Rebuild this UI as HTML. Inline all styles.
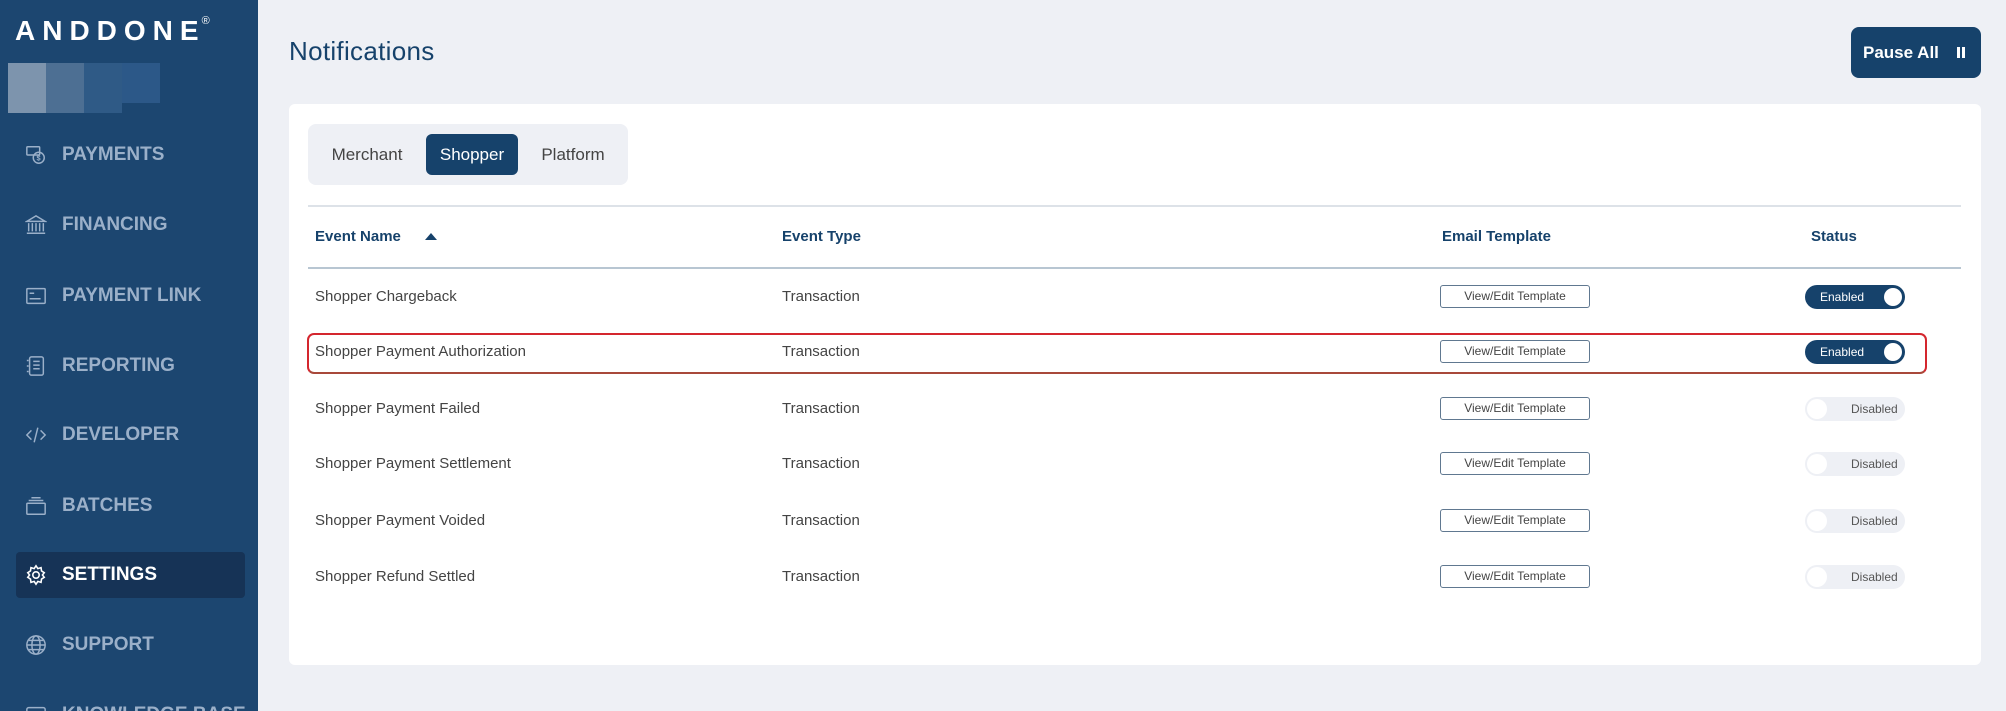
<!DOCTYPE html>
<html style="overflow:hidden"><head><meta charset="utf-8"><style>
*{box-sizing:border-box;margin:0;padding:0}
html,body{width:2006px;height:711px;overflow:hidden}
body{background:#eef0f5;font-family:"Liberation Sans",sans-serif;position:relative}
.sb{position:absolute;left:0;top:0;width:258px;height:711px;background:#1c4670;overflow:hidden}
.logo{position:absolute;left:15px;top:15px;color:#fff;font-weight:bold;font-size:28px;letter-spacing:7px}
.logo sup{font-size:11px;letter-spacing:0;font-weight:normal;vertical-align:top;position:relative;top:0px;left:-4px}
.blur{position:absolute;left:8px;top:63px;height:50px;display:flex}
.blur div{width:38px;height:50px}
.nav{position:absolute;left:0;width:258px;height:46px;display:flex;align-items:center;color:#9bb0c9;font-weight:bold;font-size:19px}
.nav svg{position:absolute;left:25px;width:22px;height:22px}
.nav span{position:absolute;left:62px}
.nav.act{left:16px;width:229px;background:#163356;border-radius:4px;color:#fff}
.nav.act svg{left:9px}.nav.act span{left:46px}
h1{position:absolute;left:289px;top:36px;font-size:26px;color:#16426b;font-weight:normal;letter-spacing:.3px}
.pause{position:absolute;left:1851px;top:27px;width:130px;height:51px;background:#16426b;border-radius:8px;color:#fff;font-weight:bold;font-size:17px;display:flex;align-items:center;padding-left:12px}
.pause i{display:inline-block;width:3px;height:11px;background:#fff;margin-left:4px}
.card{position:absolute;left:289px;top:104px;width:1692px;height:561px;background:#fff;border-radius:6px}
.tabs{position:absolute;left:308px;top:124px;width:320px;height:61px;background:#eef0f5;border-radius:8px}
.tab{position:absolute;top:10px;height:41px;line-height:41px;font-size:17px;color:#444;text-align:center}
.tab.on{background:#16426b;color:#fff;border-radius:6px}
.line{position:absolute;left:308px;width:1653px;height:2px;background:#dde2e8}
.th{position:absolute;top:228px;font-weight:bold;font-size:15px;color:#16426b}
.td{position:absolute;font-size:15px;color:#444}
.btn{position:absolute;left:1440px;width:150px;height:23px;border:1px solid #607890;border-radius:3px;font-size:12px;color:#444;text-align:center;line-height:21px}
.tg{position:absolute;left:1805px;width:100px;height:24px;border-radius:12px;font-size:12px;line-height:24px}
.tg.en{background:#16426b;color:#fff;padding-left:15px}
.tg.en::after{content:"";position:absolute;right:3px;top:3px;width:18px;height:18px;border-radius:50%;background:#fff}
.tg.dis{background:#eef0f5;color:#555;padding-left:46px}
.tg.dis::before{content:"";position:absolute;left:2px;top:2px;width:20px;height:20px;border-radius:50%;background:#fff}
.red{position:absolute;left:307px;top:333px;width:1620px;height:41px;border:2px solid #d4262e;border-bottom-color:#a8483a;border-radius:7px}
</style></head><body>
<div class="sb">
<div class="logo">ANDDONE<sup>®</sup></div>
<div class="blur"><div style="background:#7d94ad"></div><div style="background:#4d6f93"></div><div style="background:#2f5a86"></div><div style="background:#2c5888;height:40px"></div></div>
<div class="nav" style="top:132px"><svg viewBox="0 0 24 24" fill="none" stroke="#9bb0c9" stroke-width="1.6"><rect x="2" y="3" width="14" height="9" rx="1"/><circle cx="15" cy="15" r="6"/><text x="12.5" y="18" font-size="8" fill="#9bb0c9" stroke="none">$</text></svg><span>PAYMENTS</span></div>
<div class="nav" style="top:202px"><svg viewBox="0 0 24 24" fill="none" stroke="#9bb0c9" stroke-width="1.6"><path d="M2 8L12 2l10 6H2zM4 10v9M8 10v9M12 10v9M16 10v9M20 10v9M2 21h20"/></svg><span>FINANCING</span></div>
<div class="nav" style="top:273px"><svg viewBox="0 0 24 24" fill="none" stroke="#9bb0c9" stroke-width="1.6"><rect x="2" y="4" width="20" height="16" rx="1"/><path d="M5 9h5M5 15h12"/></svg><span>PAYMENT LINK</span></div>
<div class="nav" style="top:343px"><svg viewBox="0 0 24 24" fill="none" stroke="#9bb0c9" stroke-width="1.6"><rect x="5" y="2" width="15" height="20" rx="2"/><path d="M9 7h7M9 11h7M9 15h7M2 6h2M2 12h2M2 18h2"/></svg><span>REPORTING</span></div>
<div class="nav" style="top:412px"><svg viewBox="0 0 24 24" fill="none" stroke="#9bb0c9" stroke-width="1.6"><path d="M7 7l-5 5 5 5M17 7l5 5-5 5M14 4l-4 16"/></svg><span>DEVELOPER</span></div>
<div class="nav" style="top:483px"><svg viewBox="0 0 24 24" fill="none" stroke="#9bb0c9" stroke-width="1.6"><rect x="2" y="9" width="20" height="12" rx="1"/><path d="M4 6h16M7 3h10"/></svg><span>BATCHES</span></div>
<div class="nav act" style="top:552px"><svg viewBox="0 0 24 24" fill="none" stroke="#fff" stroke-width="1.7"><circle cx="12" cy="12" r="3.5"/><path d="M12 2l2 3 3.5-1 .5 3.5 3 2-2 2.5 2 2.5-3 2-.5 3.5-3.5-1-2 3-2-3-3.5 1-.5-3.5-3-2 2-2.5-2-2.5 3-2 .5-3.5 3.5 1z"/></svg><span>SETTINGS</span></div>
<div class="nav" style="top:622px"><svg viewBox="0 0 24 24" fill="none" stroke="#9bb0c9" stroke-width="1.6"><circle cx="12" cy="12" r="10"/><ellipse cx="12" cy="12" rx="4.5" ry="10"/><path d="M2 12h20M4 7h16M4 17h16"/></svg><span>SUPPORT</span></div>
<div class="nav" style="top:692px"><svg viewBox="0 0 24 24" fill="none" stroke="#9bb0c9" stroke-width="1.6"><rect x="2" y="4" width="20" height="16" rx="2"/></svg><span>KNOWLEDGE BASE</span></div>
</div>
<h1>Notifications</h1>
<div class="pause">Pause All&nbsp;&nbsp;&nbsp;<i></i><i style="margin-left:2px"></i></div>
<div class="card"></div>
<div class="tabs">
<div class="tab" style="left:12px;width:94px">Merchant</div>
<div class="tab on" style="left:118px;width:92px">Shopper</div>
<div class="tab" style="left:218px;width:94px">Platform</div>
</div>
<div class="line" style="top:205px"></div>
<div class="th" style="left:315px">Event Name</div>
<svg style="position:absolute;left:425px;top:232px" width="12" height="8"><path d="M0 8L6 1l6 7z" fill="#16426b"/></svg>
<div class="th" style="left:782px">Event Type</div>
<div class="th" style="left:1442px">Email Template</div>
<div class="th" style="left:1811px">Status</div>
<div class="line" style="top:267px;background:#b8c6d2"></div>

<div class="td" style="left:315px;top:288px">Shopper Chargeback</div><div class="td" style="left:782px;top:288px">Transaction</div><div class="btn" style="top:285px">View/Edit Template</div><div class="tg en" style="top:285px">Enabled</div>
<div class="td" style="left:315px;top:343px">Shopper Payment Authorization</div><div class="td" style="left:782px;top:343px">Transaction</div><div class="btn" style="top:340px">View/Edit Template</div><div class="tg en" style="top:340px">Enabled</div>
<div class="td" style="left:315px;top:400px">Shopper Payment Failed</div><div class="td" style="left:782px;top:400px">Transaction</div><div class="btn" style="top:397px">View/Edit Template</div><div class="tg dis" style="top:397px">Disabled</div>
<div class="td" style="left:315px;top:455px">Shopper Payment Settlement</div><div class="td" style="left:782px;top:455px">Transaction</div><div class="btn" style="top:452px">View/Edit Template</div><div class="tg dis" style="top:452px">Disabled</div>
<div class="td" style="left:315px;top:512px">Shopper Payment Voided</div><div class="td" style="left:782px;top:512px">Transaction</div><div class="btn" style="top:509px">View/Edit Template</div><div class="tg dis" style="top:509px">Disabled</div>
<div class="td" style="left:315px;top:568px">Shopper Refund Settled</div><div class="td" style="left:782px;top:568px">Transaction</div><div class="btn" style="top:565px">View/Edit Template</div><div class="tg dis" style="top:565px">Disabled</div>
<div class="red"></div>
</body></html>
